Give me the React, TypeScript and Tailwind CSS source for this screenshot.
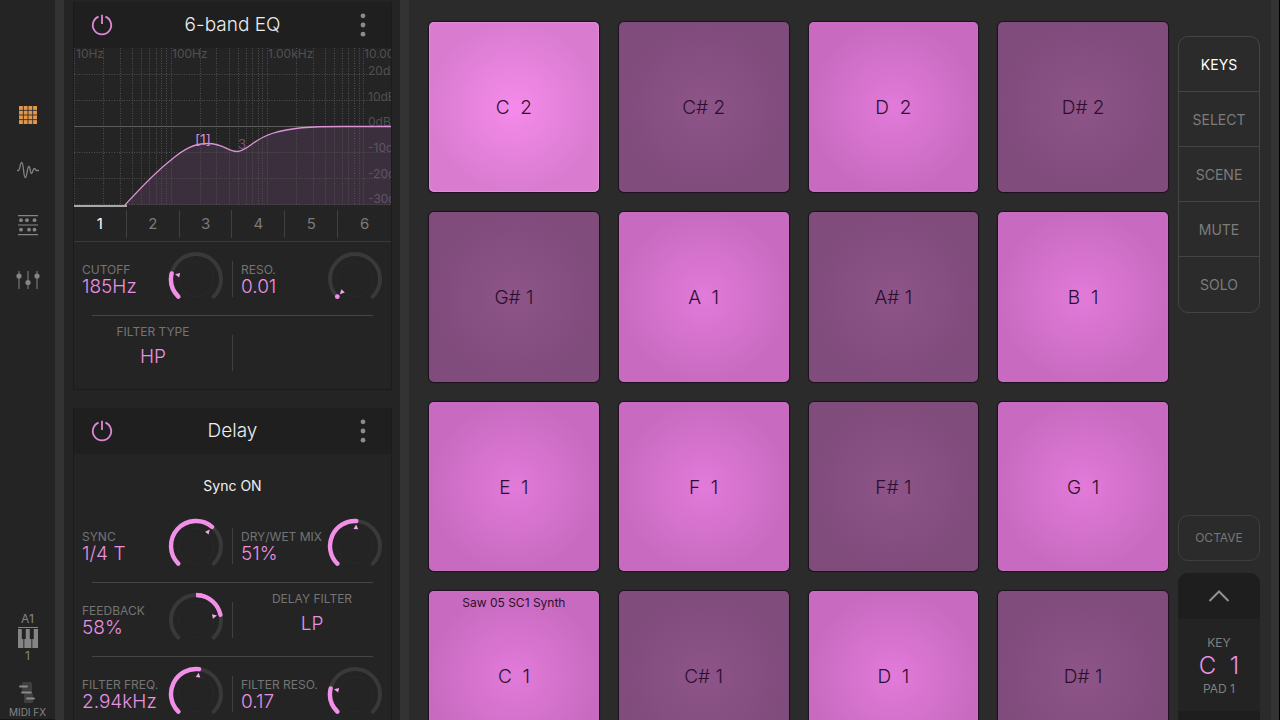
import { useState } from "react";
import type { ReactNode } from "react";

const polar = (r: number, deg: number) => {
  const a = (deg * Math.PI) / 180;
  return [28 + r * Math.sin(a), 28 - r * Math.cos(a)];
};

const arc = (r: number, from: number, to: number) => {
  const [x1, y1] = polar(r, from);
  const [x2, y2] = polar(r, to);
  return `M${x1} ${y1}A${r} ${r} 0 ${to - from > 180 ? 1 : 0} 1 ${x2} ${y2}`;
};

type KnobProps = { label: string; value: string; angle: number; from?: number };

function Knob({ label, value, angle, from = -135 }: KnobProps) {
  return (
    <label className="flex flex-1 items-center justify-between px-2">
      <span className="flex flex-col whitespace-nowrap">
        <span className="text-[12px] leading-4 text-[#747474]">{label}</span>
        <span className="text-[19px] font-light leading-[18px] text-[#ea90e2]">{value}</span>
      </span>
      <span className="relative -ml-2 block size-14 shrink-0">
        <svg viewBox="0 0 56 56" className="size-14" fill="none" aria-hidden="true">
          <circle cx="28" cy="28" r="17.5" stroke="#292929" />
          <path d={arc(25, -135, 135)} stroke="#393939" strokeWidth="4" strokeLinecap="round" />
          {angle > from ? (
            <>
              {from === 0 ? <path d={arc(25, 0, 20)} stroke="#f28fe8" strokeWidth="4.4" /> : null}
              <path
                d={arc(25, from === 0 ? 5 : from, angle)}
                stroke="#f28fe8"
                strokeWidth="4.4"
                strokeLinecap="round"
              />
            </>
          ) : (
            <circle cx={polar(25, angle)[0]} cy={polar(25, angle)[1]} r="2.4" fill="#f28fe8" />
          )}
          <path d="M28 6.5L30.3 11.2H25.7Z" fill="#f5a5ec" transform={`rotate(${angle} 28 28)`} />
        </svg>
        <input
          type="range"
          min={-135}
          max={135}
          defaultValue={angle}
          className="absolute inset-0 size-full cursor-pointer opacity-0"
        />
      </span>
    </label>
  );
}

function Choice({ label, value }: { label: string; value: string }) {
  return (
    <button className="flex flex-1 flex-col items-center self-start pt-2">
      <span className="text-[12px] leading-4 text-[#747474]">{label}</span>
      <span className="text-[19px] font-light leading-[34px] text-[#ea90e2]">{value}</span>
    </button>
  );
}

function Row({ left, right }: { left: ReactNode; right?: ReactNode }) {
  return (
    <div className="flex h-[73px] shrink-0 items-center">
      <div className="flex flex-1 self-stretch">{left}</div>
      <div className="h-9 w-px bg-[#404040]" />
      <div className="flex flex-1 self-stretch">{right}</div>
    </div>
  );
}

const Rule = () => <div className="mx-[18px] h-px shrink-0 bg-[#454545]" />;

function CardHeader({ title }: { title: string }) {
  return (
    <header className="flex h-[46px] shrink-0 items-center justify-between bg-[#1f1f1f] px-4">
      <button aria-label={`${title} power`}>
        <svg viewBox="0 0 24 24" className="size-6" fill="none" stroke="#dd87d6" strokeWidth="1.8">
          <path d="M15.4 3.7A9.2 9.2 0 1 1 8.6 3.7" />
          <path d="M12 1.8V11" />
        </svg>
      </button>
      <h2 className="text-[19px] font-light text-[#ededed]">{title}</h2>
      <button aria-label={`${title} menu`}>
        <svg viewBox="0 0 24 24" className="size-6 overflow-visible" fill="#8b8b8b">
          <circle cx="12" cy="2.8" r="2.4" />
          <circle cx="12" cy="12" r="2.4" />
          <circle cx="12" cy="21.2" r="2.4" />
        </svg>
      </button>
    </header>
  );
}

const DECADE = 96.4;
const verticals = [0, 1, 2].flatMap((d) =>
  [1, 2, 3, 4, 5, 6, 7, 8, 9].map((n) => 0.6 + DECADE * (d + Math.log10(n))),
);
verticals.push(0.6 + DECADE * 3);

const CURVE =
  "M51 157C64 143 78 127 97 112C110 101 120 95.5 134 95.5C150 95.5 153 103.5 163 103.5C173 103.5 178 92 198 85.5C217 79.5 235 78.5 270 78.5H317";

const freqLabels: [number, string][] = [[2, "10Hz"], [98, "100Hz"], [194, "1.00kHz"], [290, "10.00kHz"]];
const gainLabels: [number, string][] = [
  [27, "20dB"],
  [53, "10dB"],
  [78, "0dB"],
  [104, "-10dB"],
  [130, "-20dB"],
  [155, "-30dB"],
];

function EqGraph() {
  return (
    <svg viewBox="0 0 317 157" className="block w-full" fill="none" aria-label="EQ response">
      <g fontSize="12" fill="#505050">
        {freqLabels.map(([x, t]) => (
          <text key={t} x={x} y="10">
            {t}
          </text>
        ))}
        {gainLabels.map(([y, t]) => (
          <text key={t} x="294" y={y}>
            {t}
          </text>
        ))}
      </g>
      <path d={`${CURVE}V157Z`} fill="#b46cc0" fillOpacity=".17" />
      <g stroke="#4e4e4e" strokeDasharray="1 1.5">
        {verticals.map((x) => (
          <path key={x} d={`M${Math.floor(x) + 0.5} 0V157`} />
        ))}
        {[26, 52, 104, 130, 156].map((y) => (
          <path key={y} d={`M0 ${y + 0.5}H317`} />
        ))}
      </g>
      <path d="M0 78.5H317" stroke="#5c5c5c" />
      <path d={CURVE} stroke="#d993d6" strokeWidth="1.3" />
      <text x="121" y="97" fontSize="14" fill="#dd87d6">
        [1]
      </text>
      <text x="164" y="101" fontSize="13" fill="#775177">
        3
      </text>
    </svg>
  );
}

function EqCard() {
  const [band, setBand] = useState(1);
  return (
    <section className="border-x border-b border-[#1b1b1b] bg-[#242424]">
      <CardHeader title="6-band EQ" />
      <EqGraph />
      <div className="grid h-[37px] grid-cols-6 border-b border-[#3a3a3a]">
        {[1, 2, 3, 4, 5, 6].map((n) => (
          <button
            key={n}
            onClick={() => setBand(n)}
            className={
              n === band
                ? "flex items-center border-t-2 border-[#a8a8a8] text-[15px] text-white"
                : "flex items-center border-t-2 border-transparent text-[15px] text-[#7a7a7a]"
            }
          >
            <span className="flex-1">{n}</span>
            {n < 6 ? <span className="h-7 w-px bg-[#404040]" /> : null}
          </button>
        ))}
      </div>
      <Row
        left={<Knob label="CUTOFF" value="185Hz" angle={-77} />}
        right={<Knob label="RESO." value="0.01" angle={-135} />}
      />
      <Rule />
      <Row left={<Choice label="FILTER TYPE" value="HP" />} />
    </section>
  );
}

function DelayCard() {
  return (
    <section className="flex flex-col border-x border-[#1b1b1b] bg-[#242424]">
      <CardHeader title="Delay" />
      <button className="h-[55px] shrink-0 pt-2 text-[14px] text-[#f0f0f0]">Sync ON</button>
      <Row
        left={<Knob label="SYNC" value="1/4 T" angle={40} />}
        right={<Knob label="DRY/WET MIX" value="51%" angle={3} />}
      />
      <Rule />
      <Row
        left={<Knob label="FEEDBACK" value="58%" angle={78} from={0} />}
        right={<Choice label="DELAY FILTER" value="LP" />}
      />
      <Rule />
      <Row
        left={<Knob label="FILTER FREQ." value="2.94kHz" angle={7} />}
        right={<Knob label="FILTER RESO." value="0.17" angle={-77} />}
      />
    </section>
  );
}

function NavRail() {
  const cells = [0, 1, 2, 3];
  return (
    <nav className="flex w-[55px] shrink-0 flex-col items-center border-b border-[#2b0a14] bg-[#242424] pt-[87px]">
      <button aria-label="Pads" className="flex h-[55px] items-center">
        <svg viewBox="0 0 18 18" className="size-[18px]" fill="#e0964b">
          {cells.flatMap((r) =>
            cells.map((c) => <rect key={`${r}${c}`} x={c * 4.7} y={r * 4.7} width="3.9" height="3.9" />),
          )}
        </svg>
      </button>
      <button aria-label="Audio" className="flex h-[55px] items-center">
        <svg viewBox="0 0 22 18" className="h-[18px] w-[22px]" fill="none" stroke="#838383" strokeWidth="1.3">
          <path
            d="M.5 9.5H1.5C3 9.5 3 1.5 4.7 1.5C6.8 1.5 6.3 16.5 8.3 16.5C10.3 16.5 10 5.5 11.8 5.5C13.5 5.5 13 12.5 14.5 12.5C16 12.5 15.8 7.5 17.2 7.5C18.5 7.5 18.5 9.5 19.5 9.5H21.5"
            strokeLinecap="round"
            strokeLinejoin="round"
          />
        </svg>
      </button>
      <button aria-label="Sequencer" className="flex h-[55px] items-center">
        <svg viewBox="0 0 22 22" className="size-[22px]" fill="#858585">
          <path d="M1 1h20v1.2H1zM1 10.4h20v1.2H1zM1 20h20v1.2H1z" />
          <circle cx="4" cy="6.2" r="1.9" />
          <circle cx="10" cy="6.2" r="1.9" />
          <circle cx="17.5" cy="6.2" r="1.9" />
          <circle cx="4" cy="15.7" r="1.9" />
          <circle cx="12" cy="15.7" r="1.9" />
          <circle cx="17.5" cy="15.7" r="1.9" />
        </svg>
      </button>
      <button aria-label="Mixer" className="flex h-[55px] items-center">
        <svg viewBox="0 0 24 20" className="h-5 w-6" fill="#858585">
          <path d="M2.5 1h1v18h-1zM11.5 1h1v18h-1zM20.5 1h1v18h-1z" />
          <circle cx="3" cy="6" r="2.6" />
          <circle cx="12" cy="12.5" r="2.6" />
          <circle cx="21" cy="6" r="2.6" />
        </svg>
      </button>
      <button className="mt-auto flex flex-col items-center text-[12px] leading-4 text-[#858585]">
        <span>A1</span>
        <svg viewBox="0 0 20 21" className="h-[21px] w-5" aria-hidden="true">
          <path d="M0 0h20v1H0zM0 2h20v19H0z" fill="#858585" />
          <path d="M3.8 2h4v10h-4zM11.8 2h4v10h-4zM5.4 12h.9v9h-.9zM13.4 12h.9v9h-.9z" fill="#242424" />
        </svg>
        <span>1</span>
      </button>
      <button className="mt-[18px] flex flex-col items-center gap-[2px] whitespace-nowrap text-[10px] leading-[13px] text-[#858585]">
        <svg viewBox="0 0 18 22" className="h-[22px] w-[18px]" aria-hidden="true">
          <rect x="4" y="0" width="10" height="10" rx="1.5" fill="#3f3f3f" />
          <rect x="6" y="11" width="9" height="10" rx="1.5" fill="#3f3f3f" />
          <path d="M2 4.5H9M4 10.5H13M9 16.5H16" stroke="#8a8a8a" strokeWidth="1.8" strokeLinecap="round" />
        </svg>
        <span>MIDI FX</span>
      </button>
    </nav>
  );
}

type Pad = { note: string; tone: "hot" | "on" | "off"; caption?: string };

const pads: Pad[] = [
  { note: "C  2", tone: "hot" },
  { note: "C# 2", tone: "off" },
  { note: "D  2", tone: "on" },
  { note: "D# 2", tone: "off" },
  { note: "G# 1", tone: "off" },
  { note: "A  1", tone: "on" },
  { note: "A# 1", tone: "off" },
  { note: "B  1", tone: "on" },
  { note: "E  1", tone: "on" },
  { note: "F  1", tone: "on" },
  { note: "F# 1", tone: "off" },
  { note: "G  1", tone: "on" },
  { note: "C  1", tone: "on", caption: "Saw 05 SC1 Synth" },
  { note: "C# 1", tone: "off" },
  { note: "D  1", tone: "on" },
  { note: "D# 1", tone: "off" },
];

const tones = {
  hot: "bg-[radial-gradient(circle_closest-side,#f58aea,#d97cd0)] inset-shadow-[0_0_2px_#f4b4ee]",
  on: "bg-[radial-gradient(circle_closest-side,#e27ada,#c86bc0)] inset-shadow-[0_0_1px_#d68bd0]",
  off: "bg-[radial-gradient(circle_closest-side,#8d5488,#804c7c)]",
};

function PadButton({ note, tone, caption }: Pad) {
  return (
    <button
      className={`relative flex aspect-square items-center justify-center rounded-[5px] pt-[3px] text-[19px] font-light whitespace-pre text-[#2c0f2e] shadow-[0_0_1px_1px_#1f0f20] ${tones[tone]}`}
    >
      {caption ? (
        <span className="absolute inset-x-0 top-1 text-[12px] font-normal leading-4">{caption}</span>
      ) : null}
      {note}
    </button>
  );
}

function SideControls() {
  const [mode, setMode] = useState("KEYS");
  return (
    <aside className="flex w-[82px] shrink-0 flex-col pt-9">
      <div className="flex flex-col divide-y divide-[#444444] rounded-[10px] border border-[#444444]">
        {["KEYS", "SELECT", "SCENE", "MUTE", "SOLO"].map((m) => (
          <button
            key={m}
            onClick={() => setMode(m)}
            className={m === mode ? "h-[55px] text-[14px] text-white" : "h-[55px] text-[14px] text-[#7c7c7c]"}
          >
            {m}
          </button>
        ))}
      </div>
      <button className="mt-auto h-[46px] shrink-0 rounded-[10px] border border-[#3e3e3e] text-[12px] text-[#777777]">
        OCTAVE
      </button>
      <div className="mt-3 flex shrink-0 flex-col overflow-hidden rounded-t-[10px] bg-[#232323]">
        <button aria-label="Key up" className="flex h-[46px] items-center justify-center bg-[#1e1e1e]">
          <svg viewBox="0 0 22 12" className="h-3 w-[22px]" fill="none" stroke="#929292" strokeWidth="2">
            <path d="M1.500 11L11 1.500L20.500 11" />
          </svg>
        </button>
        <div className="flex h-[92px] flex-col items-center pt-4 text-[12px] leading-4 text-[#808080]">
          <span>KEY</span>
          <output className="text-[24px] font-light leading-[30px] whitespace-pre text-[#ea90e2]">C  1</output>
          <span>PAD 1</span>
        </div>
        <button aria-label="Key down" className="h-[9px] bg-[#1e1e1e]" />
      </div>
    </aside>
  );
}

export default function App() {
  return (
    <div className="flex h-screen overflow-hidden bg-[#2b2b2b] font-['Inter','Liberation_Sans',sans-serif]">
      <NavRail />
      <div className="w-[9px] shrink-0 bg-[#333333]" />
      <div className="flex w-[336px] shrink-0 flex-col gap-[18px] overflow-hidden bg-[#242424] pt-[2px] pr-2 pl-[9px]">
        <EqCard />
        <DelayCard />
      </div>
      <div className="w-[9px] shrink-0 bg-[#333333]" />
      <main className="flex min-w-0 flex-1 gap-[10px] pr-[11px] pl-5">
        <div className="grid flex-1 grid-cols-4 content-start gap-5 pt-[22px]">
          {pads.map((p) => (
            <PadButton key={p.note} {...p} />
          ))}
        </div>
        <SideControls />
      </main>
      <div className="w-[9px] shrink-0 border-r border-black bg-[#333333]" />
    </div>
  );
}
